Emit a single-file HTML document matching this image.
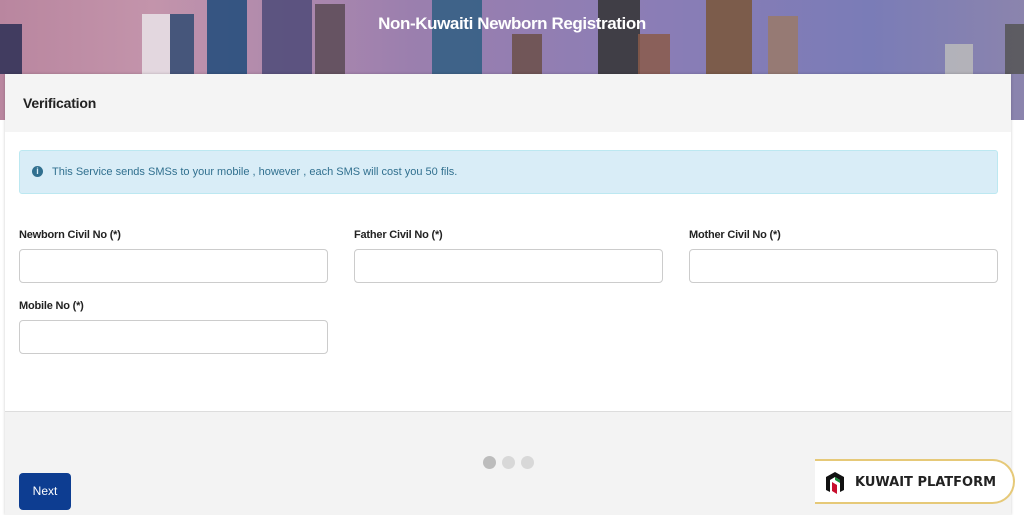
<!DOCTYPE html>
<html><head><style>
*{margin:0;padding:0;box-sizing:border-box}
body{width:1024px;height:515px;overflow:hidden;font-family:"Liberation Sans",sans-serif;background:#fff;position:relative}
.hero{position:absolute;left:0;top:0;width:1024px;height:120px;background:linear-gradient(90deg,#b9869f 0%,#c394ab 15%,#9b7fae 40%,#8a7db6 65%,#7a7cb7 85%,#8b84ad 100%)}
.b{position:absolute;bottom:46px;opacity:.85}
.title{position:absolute;top:14px;left:0;width:1024px;text-align:center;color:#fff;font-size:17px;font-weight:bold;letter-spacing:-0.4px}
.card{position:absolute;left:5px;top:74px;width:1006px;height:441px;background:#fff;box-shadow:0 0 3px rgba(0,0,0,.2)}
.ch{height:58px;background:#f4f4f4;padding:21px 18px;font-size:14px;font-weight:bold;color:#222;letter-spacing:-0.2px}
.alert{position:absolute;left:14px;top:76px;width:979px;height:44px;background:#d9edf7;border:1px solid #bce8f1;border-radius:3px;font-size:11px;color:#31708f;padding:15px 32px}
.alert i{position:absolute;left:12px;top:15px;width:11px;height:11px;border-radius:50%;background:#31708f;color:#d9edf7;font-style:normal;font-size:9px;font-weight:bold;text-align:center;line-height:11px}
.lbl{position:absolute;font-size:11px;font-weight:bold;color:#222;letter-spacing:-0.2px}
.inp{position:absolute;width:309px;height:34px;border:1px solid #ccc;border-radius:4px}
.foot{position:absolute;left:0;top:337px;width:1006px;height:104px;background:#f3f3f3;border-top:1px solid #ddd}
.dot{position:absolute;top:44px;width:13px;height:13px;border-radius:50%;background:#d8d8d8}
.btn{position:absolute;left:14px;top:61px;width:52px;height:37px;background:#0d3d91;border-radius:4px;color:#fff;font-size:12px;text-align:center;line-height:37px}
.kp{position:absolute;left:815px;top:459px;width:200px;height:45px;background:#fff;border:2px solid #e6c978;border-left:none;border-radius:0 24px 24px 0;font-family:"DejaVu Sans",sans-serif;font-weight:bold;font-size:13px;color:#222;padding:14px 0 0 40px}
</style></head><body>
<div class="hero">
<div class="b" style="left:0;width:22px;height:50px;background:#2b2f55"></div>
<div class="b" style="left:142px;width:52px;height:60px;background:#e9e3e8"></div>
<div class="b" style="left:170px;width:24px;height:60px;background:#2a3f6a"></div>
<div class="b" style="left:207px;width:40px;height:74px;background:#1f4b7a"></div>
<div class="b" style="left:262px;width:50px;height:74px;background:#4d4a78"></div>
<div class="b" style="left:315px;width:30px;height:70px;background:#5a4a55"></div>
<div class="b" style="left:432px;width:50px;height:74px;background:#2f5e82"></div>
<div class="b" style="left:512px;width:30px;height:40px;background:#6b4f48"></div>
<div class="b" style="left:598px;width:42px;height:74px;background:#333"></div>
<div class="b" style="left:638px;width:32px;height:40px;background:#8a5b4a"></div>
<div class="b" style="left:706px;width:46px;height:74px;background:#7a5638"></div>
<div class="b" style="left:768px;width:30px;height:58px;background:#9a7a68"></div>
<div class="b" style="left:945px;width:28px;height:30px;background:#bbb"></div>
<div class="b" style="left:1005px;width:19px;height:50px;background:#555"></div>
<div class="title">Non-Kuwaiti Newborn Registration</div>
</div>
<div class="card">
<div class="ch">Verification</div>
<div class="alert"><i>i</i>This Service sends SMSs to your mobile , however , each SMS will cost you 50 fils.</div>
<div class="lbl" style="left:14px;top:155px">Newborn Civil No (*)</div>
<div class="lbl" style="left:349px;top:155px">Father Civil No (*)</div>
<div class="lbl" style="left:684px;top:155px">Mother Civil No (*)</div>
<div class="inp" style="left:14px;top:175px"></div>
<div class="inp" style="left:349px;top:175px"></div>
<div class="inp" style="left:684px;top:175px"></div>
<div class="lbl" style="left:14px;top:226px">Mobile No (*)</div>
<div class="inp" style="left:14px;top:246px"></div>
<div class="foot">
<div class="dot" style="left:478px;background:#bcbcbc"></div>
<div class="dot" style="left:497px"></div>
<div class="dot" style="left:516px"></div>
<div class="btn">Next</div>
</div>
</div>
<div class="kp"><svg style="position:absolute;left:9px;top:10px" width="22" height="24" viewBox="0 0 22 24"><path d="M2 6 L11 1 L20 6 L20 19 L16 21 L16 9 L11 6 L6 9 L6 21 L2 19Z" fill="#111"/><path d="M11 6 L16 9 L16 12 L11 9Z" fill="#1a8a3a"/><path d="M8 11 L13 14 L13 23 L8 20Z" fill="#c8102e"/></svg>KUWAIT PLATFORM</div>
</body></html>
